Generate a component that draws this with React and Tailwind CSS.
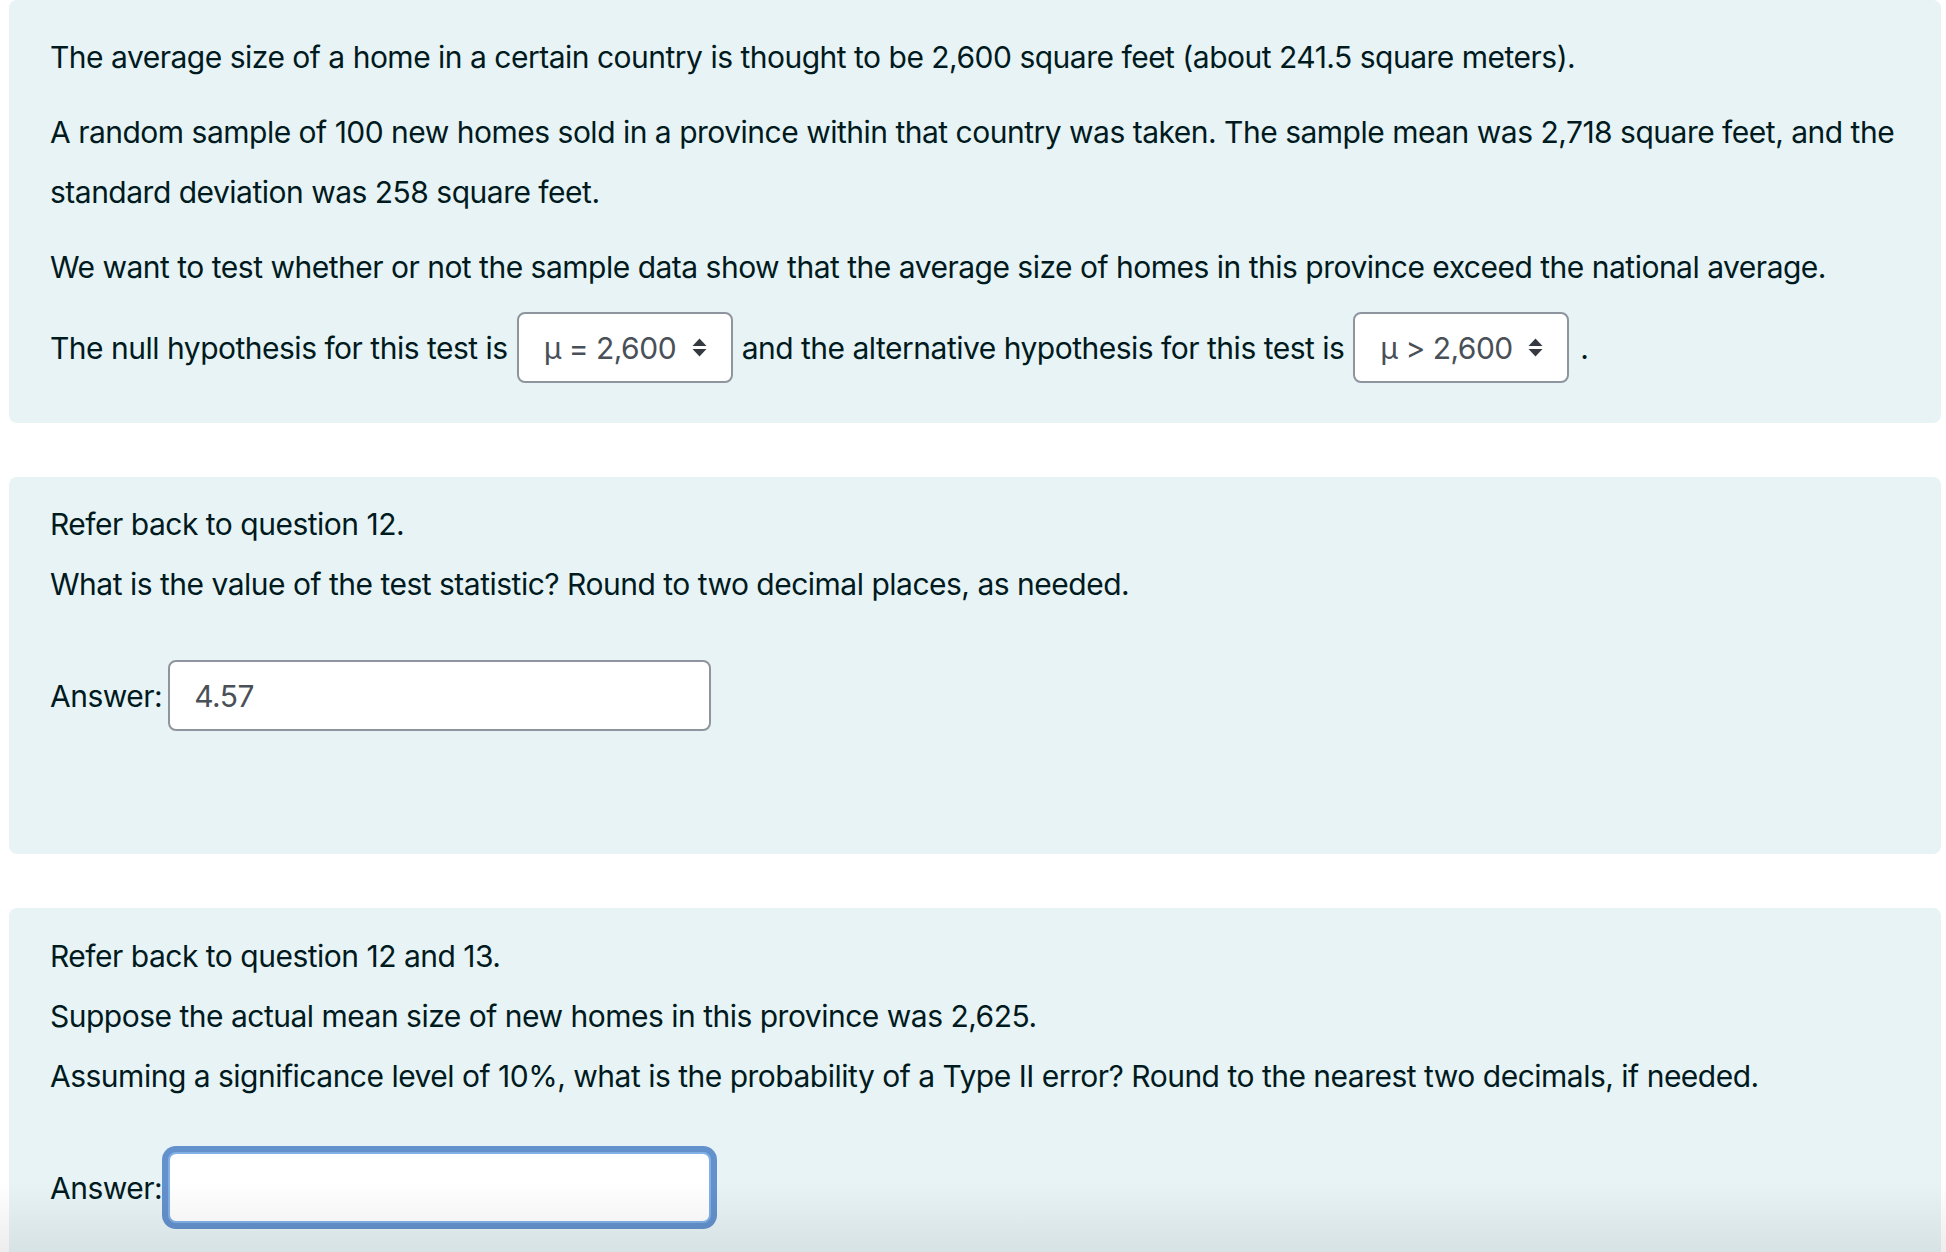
import React from "react";

const Arrows = () => (
  <svg width="15" height="19" viewBox="0 0 15 19" className="shrink-0">
    <path d="M7.5 0.5 L14.5 8 L0.5 8 Z" fill="#343a40" />
    <path d="M0.5 11 L14.5 11 L7.5 18.5 Z" fill="#343a40" />
  </svg>
);

const Select = ({ value }) => (
  <div className="w-[216px] h-[71px] shrink-0 border-2 border-[#8f959e] rounded-[8px] bg-white flex items-center justify-between pl-[25px] pr-[24px] text-[#495057]">
    <span>{value}</span>
    <Arrows />
  </div>
);

const AnswerBox = ({ value, focused }) => (
  <div
    className={
      focused
        ? "w-[543px] h-[71px] shrink-0 border-2 border-[#80b0e6] rounded-[8px] bg-white flex items-center pl-[24px] text-[#495057] shadow-[0_0_0_6px_#6391cc]"
        : "w-[543px] h-[71px] shrink-0 border-2 border-[#8f959e] rounded-[8px] bg-white flex items-center pl-[24px] text-[#495057]"
    }
  >
    {value}
  </div>
);

export default function App() {
  return (
    <div
      className="relative w-[1946px] h-[1252px] overflow-hidden bg-white text-[30px] leading-[60px] tracking-[-0.5px] text-[#001a1e]"
      style={{ fontFamily: "Inter, 'Noto Sans', sans-serif" }}
    >
      <div className="flex flex-col gap-[54px] pl-[9px] pr-[5px]">
        {/* Card 1 */}
        <div className="bg-[#e7f3f5] rounded-[8px] pl-[41px] pr-[20px] pt-[27px] pb-[40px] h-[423px]">
          <p className="mb-[15px] whitespace-nowrap">
            The average size of a home in a certain country is thought to be 2,600 square feet (about 241.5 square meters).
          </p>
          <p className="mb-[15px] whitespace-nowrap">
            A random sample of 100 new homes sold in a province within that country was taken. The sample mean was 2,718 square feet, and the
            <br />
            standard deviation was 258 square feet.
          </p>
          <p className="mb-[15px] whitespace-nowrap">
            We want to test whether or not the sample data show that the average size of homes in this province exceed the national average.
          </p>
          <div className="flex items-center gap-[9px] whitespace-nowrap">
            <span>The null hypothesis for this test is</span>
            <Select value="μ = 2,600" />
            <span>and the alternative hypothesis for this test is</span>
            <Select value="μ > 2,600" />
            <span className="ml-[2px]">.</span>
          </div>
        </div>

        {/* Card 2 */}
        <div className="bg-[#e7f3f5] rounded-[8px] pl-[41px] pr-[20px] pt-[17px] h-[377px]">
          <p className="whitespace-nowrap">Refer back to question 12.</p>
          <p className="whitespace-nowrap">What is the value of the test statistic? Round to two decimal places, as needed.</p>
          <div className="flex items-center gap-[6px] mt-[46px]">
            <span>Answer:</span>
            <AnswerBox value="4.57" />
          </div>
        </div>

        {/* Card 3 */}
        <div className="bg-[#e7f3f5] rounded-[8px] pl-[41px] pr-[20px] pt-[18px] h-[500px]">
          <p className="whitespace-nowrap">Refer back to question 12 and 13.</p>
          <p className="whitespace-nowrap">Suppose the actual mean size of new homes in this province was 2,625.</p>
          <p className="whitespace-nowrap">
            Assuming a significance level of 10%, what is the probability of a Type II error? Round to the nearest two decimals, if needed.
          </p>
          <div className="flex items-center gap-[6px] mt-[46px]">
            <span>Answer:</span>
            <AnswerBox value="" focused />
          </div>
        </div>
      </div>

      {/* bottom fade overlay */}
      <div className="absolute left-0 right-0 bottom-0 h-[70px] pointer-events-none bg-gradient-to-b from-transparent to-[rgba(0,0,0,0.07)]" />
    </div>
  );
}
